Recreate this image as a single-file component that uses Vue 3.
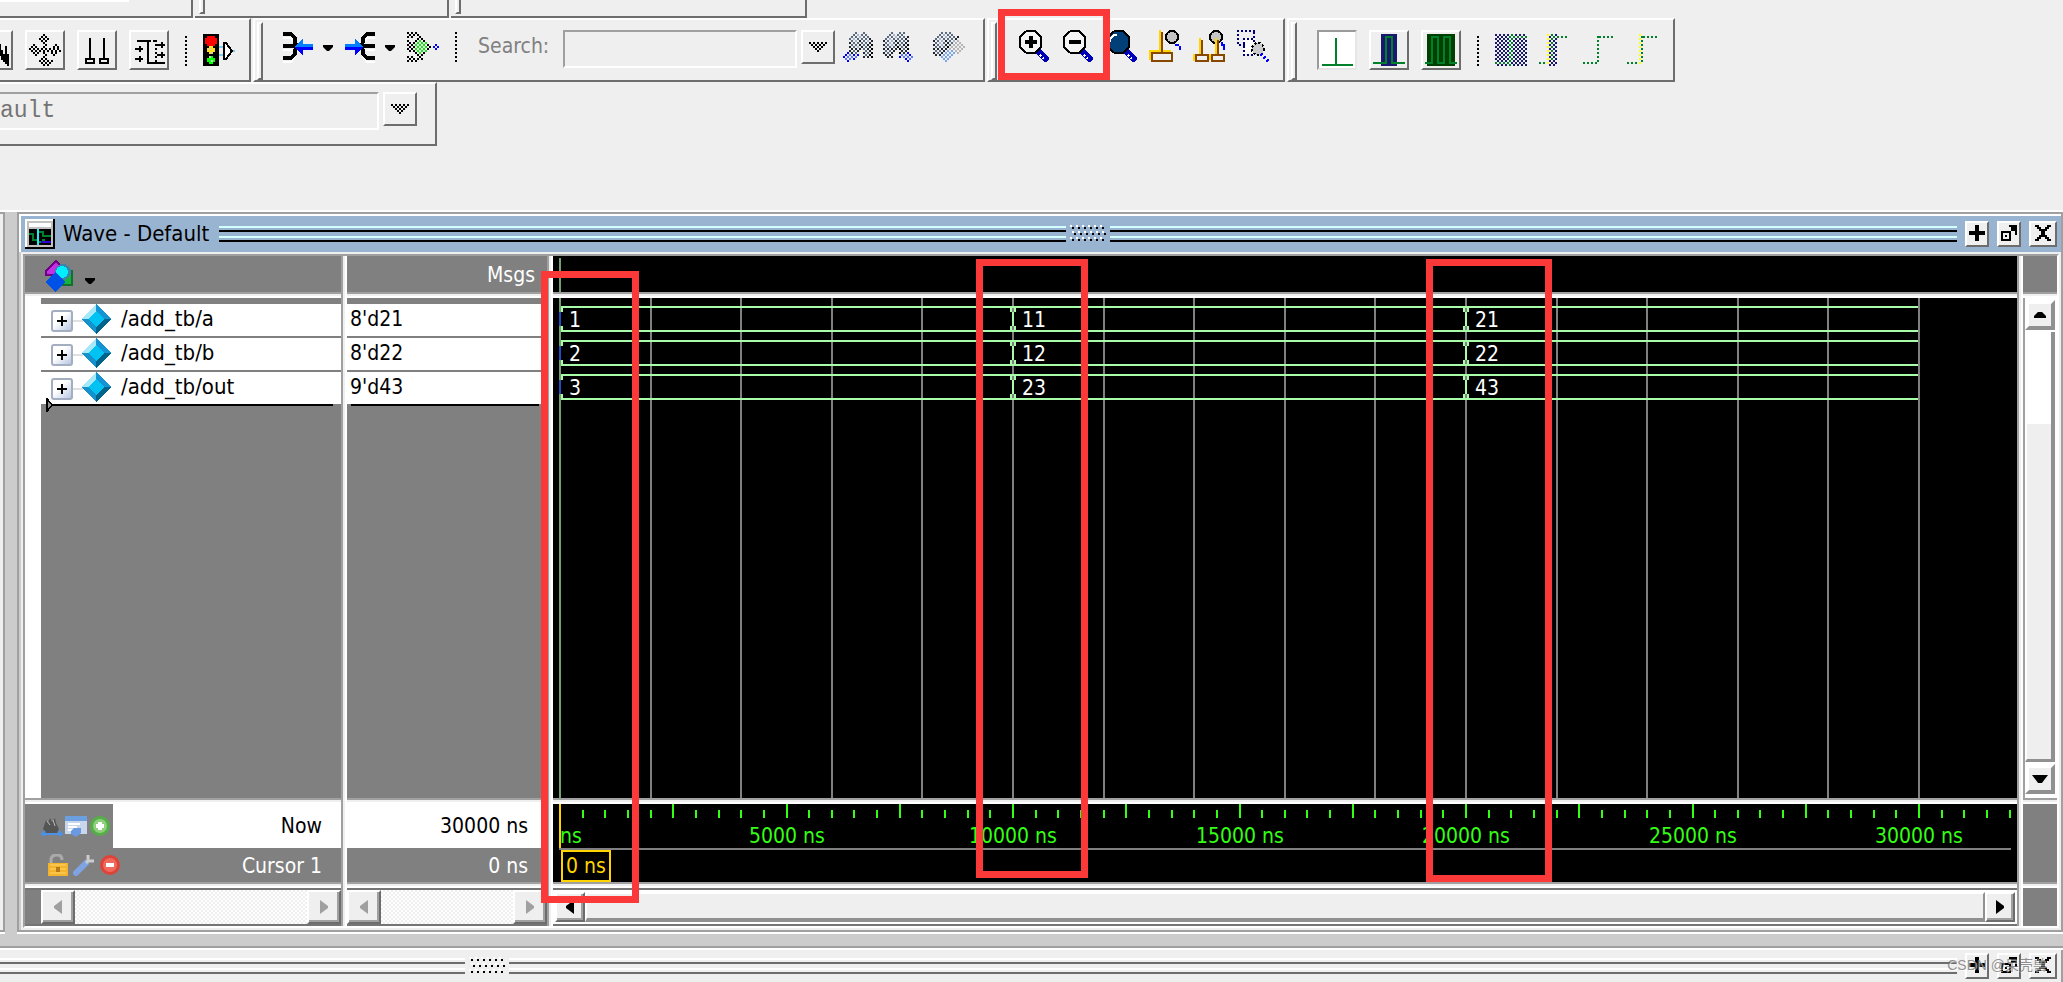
<template>
  <div class="app">
    <header class="toolbars">
      <div class="tb-row tb-row-top">
        <div class="tb-stub tb-stub-a"><span class="stub-edge"></span></div>
        <div class="tb-stub tb-stub-b"><span class="stub-handle"></span></div>
        <div class="tb-stub tb-stub-c"><span class="stub-handle"></span></div>
      </div>

      <div class="tb-row">
        <div class="tb tb-edit">
          <button type="button" class="tool cut" aria-label="Select mode">
            <Pix :rows="bitmaps.select" />
          </button>
          <button type="button" class="tool" aria-label="Pan mode">
            <Pix :rows="bitmaps.pan" />
          </button>
          <button type="button" class="tool" aria-label="Two cursor mode">
            <svg class="ico" viewBox="0 0 16 16">
              <path d="M4.5 2v10M11.5 2v10M2.5 12.5h4v2h-4zM9.5 12.5h4v2h-4z" fill="none" stroke="#000" />
            </svg>
          </button>
          <button type="button" class="tool" aria-label="Edit mode">
            <svg class="ico" viewBox="0 0 16 16">
              <path d="M2 3.5h5.5v11h8.5" fill="none" stroke="#000" />
              <path d="M8 3.5h4M11.5 3v11" fill="none" stroke="#000" stroke-dasharray="1 1" />
              <path d="M1 7.500h4M1 12.500h4M12 5.500h4M12 10.500h4M3.500 6v3M3.500 11v3M14.500 4v3M14.500 9v3" fill="none" stroke="#000" />
            </svg>
          </button>
          <span class="sep"></span>
          <button type="button" class="flat low" aria-label="Stop">
            <svg class="ico" viewBox="0 0 16 16">
              <path d="M0 0h8v16H0z" />
              <path d="M2 1h4v1h1v3H6v1H2V5H1V2h1z" fill="#f00" />
              <path d="M3 6h2v1h1v2H5v1H3V9H2V7h1z" fill="#ffde20" />
              <path d="M3 11h2v1h1v2H5v1H3v-1H2v-2h1z" fill="#0f0" />
              <path d="M3 7h1v1H3zM4 9h1v1H4zM3 11h1v1H3zM4 13h1v1H4z" fill="#ccc" />
              <path d="M8 6.500h2M8 10.500h2M15 8.500h1" stroke="#79cbe8" />
              <path d="M10.500 4.500h1l3 4-3 4h-1z" fill="#fff" stroke="#000" />
            </svg>
          </button>
        </div>

        <div class="tb tb-search">
          <span class="handle"></span>
          <button type="button" class="flat drop" aria-label="Merge">
            <svg class="ico" viewBox="0 0 16 16">
              <path d="M0 3h4l2 3M0 9h6M0 15h4l2-3" fill="none" stroke="#fff" />
              <path d="M0 1h4l2 2v2l1 2-1 2v2l-2 2H0M0 7h6" fill="none" stroke="#000" stroke-width="2" />
              <path d="M6 7.500L10 3v3h5v2z" fill="#0080ff" />
              <path d="M6 7.500L10 12V9h5V7.500z" fill="#00f" />
            </svg>
            <span class="caret"></span>
          </button>
          <button type="button" class="flat drop" aria-label="Expand">
            <svg class="ico" viewBox="0 0 16 16">
              <path d="M15 3h-4l-2 3M15 9H9M15 15h-4l-2-3" fill="none" stroke="#fff" />
              <path d="M15 1h-4L9 3v2L8 7l1 2v2l2 2h4M15 7H9" fill="none" stroke="#000" stroke-width="2" />
              <path d="M9 7.500L5 3v3H0v2z" fill="#0080ff" />
              <path d="M9 7.500L5 12V9H0V7.500z" fill="#00f" />
            </svg>
            <span class="caret"></span>
          </button>
          <button type="button" class="flat" aria-label="Show drivers"><Pix :rows="bitmaps.drivers" checker /></button>
          <span class="sep sep-high"></span>
          <label class="search-label" for="search">Search:</label>
          <input id="search" class="field" type="text" />
          <button type="button" class="tool arrow" aria-label="Search history"><Pix :rows="bitmaps.down" checker /></button>
          <button type="button" class="flat" aria-label="Find previous"><Pix :rows="bitmaps.findPrev" checker /></button>
          <button type="button" class="flat" aria-label="Find next"><Pix :rows="bitmaps.findNext" checker /></button>
          <button type="button" class="flat find-opt" aria-label="Find options"><Pix :rows="bitmaps.findOpt" checker /></button>
        </div>

        <div class="tb tb-zoom">
          <span class="handle"></span>
          <button v-for="z in ['in', 'out', 'full']" :key="z" type="button" class="flat" :aria-label="'Zoom ' + z">
            <svg class="ico" viewBox="0 0 16 16">
              <path d="M11 10l5 5M10 11l5 5" stroke="#0000b8" stroke-width="2" />
              <path d="M11.500 12.500l2 2" stroke="#fff" stroke-dasharray="1 1" />
              <path
                d="M5 .5h4l3 3v5l-3 3H5l-1-.5-2.500-2.500v-5L4 1z"
                :fill="z === 'full' ? '#003f78' : '#f5f5f5'"
                stroke="#000"
              />
              <path v-if="z === 'full'" d="M2.500 6V4.500l2-2H6" fill="none" stroke="#fff" />
              <path v-else d="M4 6h6" stroke="#000" stroke-width="2" />
              <path v-if="z === 'in'" d="M7 3v6" stroke="#000" stroke-width="2" />
            </svg>
          </button>
          <button type="button" class="flat" aria-label="Zoom on cursor">
            <svg class="ico" viewBox="0 0 16 16">
              <circle cx="11.500" cy="3.500" r="3" fill="#c4c4c4" stroke="#000" />
              <path d="M13 7h2v1h1v2h-1V8h-2z" fill="#00f" />
              <path d="M5.500 0v11M.5 15V10.500H11" stroke="#ffd400" fill="none" />
              <path d="M6.500 1v10M1.500 11.500h10v4h-10z" fill="none" stroke="#874900" />
            </svg>
          </button>
          <button type="button" class="flat" aria-label="Zoom between cursors">
            <svg class="ico" viewBox="0 0 16 16">
              <circle cx="11.500" cy="3.500" r="3" fill="#c4c4c4" stroke="#000" />
              <path d="M14 6h1v1h1v3h-1V8h-1z" fill="#00f" />
              <path d="M3.500 4v8M.5 15.500v-3H7M11.500 4v8M8.500 15v-2.500H15" stroke="#ffd400" fill="none" />
              <path d="M4.500 5v7M1.500 12.500h6v3h-6zM12.500 5v7M9.500 12.500h6v3h-6z" fill="none" stroke="#874900" />
            </svg>
          </button>
          <button type="button" class="flat" aria-label="Zoom region">
            <svg class="ico" viewBox="0 0 16 16">
              <path d="M3 4h6v8H3z" fill="#fff" />
              <path d="M.5 0v8M0 .5h9M8.500 1v5M1 7.500h3M3.500 4v9M3 4.500h6M3 12.500h6" fill="none" stroke="#00007a" stroke-dasharray="1 1" />
              <circle cx="10.500" cy="9.500" r="3" fill="#ccc" stroke="#000" stroke-dasharray="1 1" />
              <path d="M12 12l4 4" stroke="#00f" stroke-width="2" stroke-dasharray="1 1" />
            </svg>
          </button>
        </div>

        <div class="tb tb-wave">
          <span class="handle"></span>
          <button type="button" class="tool pressed" aria-label="Cursor pulse">
            <svg class="ico" viewBox="0 0 16 16">
              <path d="M.500 15.500H16M7.500 2v13" fill="none" stroke="#00802b" />
            </svg>
          </button>
          <button type="button" class="tool" aria-label="Single pulse">
            <svg class="ico" viewBox="0 0 16 16">
              <path d="M4 0h8v16H4z" fill="#191970" />
              <path d="M0 14.500h6.500v-13h3v13H16" fill="none" stroke="#00802b" />
            </svg>
          </button>
          <button type="button" class="tool" aria-label="Double pulse">
            <svg class="ico" viewBox="0 0 16 16">
              <path d="M1 0h14v16H1z" fill="#004000" />
              <path d="M0 14.500h3.500v-13h3v13h3v-13h3v13H16" fill="none" stroke="#00802b" />
            </svg>
          </button>
          <span class="sep"></span>
          <button type="button" class="flat low" aria-label="Fill all"><Pix :rows="bitmaps.fillAll" checker /></button>
          <button type="button" class="flat low" aria-label="Fill edge">
            <Pix :rows="bitmaps.fillEdge" />
          </button>
          <button type="button" class="flat low" aria-label="Rising edge">
            <svg class="ico" viewBox="0 0 16 16">
              <path d="M0 14.500h7M7.500 14V1M8 1.500h7" fill="none" stroke="#00802b" stroke-dasharray="1 1" />
            </svg>
          </button>
          <button type="button" class="flat low" aria-label="Edge at cursor">
            <svg class="ico" viewBox="0 0 16 16">
              <path d="M0 14.500h6M7.500 14V1M8 1.500h7" fill="none" stroke="#00802b" stroke-dasharray="1 1" />
              <path d="M6.500 0v16" stroke="#ff0" stroke-dasharray="1 1" />
            </svg>
          </button>
        </div>
      </div>

      <div class="tb tb-layout">
        <input class="field layout-field" type="text" value="ault" aria-label="Layout" />
        <button type="button" class="tool arrow" aria-label="Layout list"><Pix :rows="bitmaps.down" checker /></button>
      </div>
      <div class="mark mark-zoom"></div>
    </header>

    <main class="workspace">
      <aside class="neighbour"></aside>
      <section class="window">
        <div class="titlebar">
          <svg class="win-icon" viewBox="0 0 15 15">
            <path d="M0 0h15v15H0z" />
            <path d="M0 0h14v14H0z" fill="#fff" />
            <path d="M1 1h13v13H1z" fill="#c0c0c0" />
            <path d="M2 2h11v2H2z" fill="#fff" />
            <path d="M2 5h11v8H2z" />
            <path d="M2 7.500h2v3h2M6 6.500h3v2h4M7 11.500h2v-1h1" fill="none" stroke="#00802b" />
            <path d="M6.500 5v8" stroke="#2ee6f4" />
            <path d="M8 11.500h5" stroke="#2b00d5" />
          </svg>
          <h1>Wave - Default</h1>
          <span class="rail"></span>
          <span class="dots"><i v-for="n in 18" :key="n"></i></span>
          <span class="rail"></span>
          <WinButtons class="win-buttons" />
        </div>

        <div class="panes">
          <div class="cell head-names">
            <button type="button" class="flat objects" aria-label="Object filter">
              <svg class="ico" viewBox="0 0 16 16">
                <path d="M5.500 .5l4 3.500-4 3.500h-5v-2z" fill="#c42fe6" stroke="#700083" />
                <path d="M7.500 5.500h6v7h-6z" fill="#17b13b" stroke="#13702d" />
                <circle cx="9" cy="6" r="4" fill="#3b86a7" />
                <circle cx="8.500" cy="6" r="3" fill="#00efff" />
                <path d="M5 6l5 5-5 5-5-5z" fill="#0052e6" />
              </svg>
              <span class="caret"></span>
            </button>
          </div>
          <div class="cell head-msgs">Msgs</div>
          <div class="cell head-wave"><span class="origin"></span></div>
          <div class="cell head-end"></div>

          <div class="cell body-names">
            <ul>
              <li v-for="s in signals" :key="s.name">
                <button type="button" class="expander" :aria-label="'Expand ' + s.name"></button>
                <span class="twig"></span>
                <svg class="gem" viewBox="0 0 30 30">
                  <path d="M15 0L0 15h15z" fill="#a4e8f9" />
                  <path d="M15 0l15 15H15z" fill="#1593d3" />
                  <path d="M0 15l15 15V15z" fill="#1591cb" />
                  <path d="M30 15L15 30V15z" fill="#00638b" />
                  <path d="M15 7l8 8-8 8-8-8z" fill="#00c2f3" />
                </svg>
                {{ s.name }}
              </li>
            </ul>
            <div class="end-line"></div>
            <svg class="insert-mark" viewBox="0 0 5 9">
              <path d="M.5 .5v8l3.500-4z" fill="#909090" stroke="#000" />
            </svg>
          </div>
          <div class="cell body-values">
            <ul>
              <li v-for="s in signals" :key="s.name">{{ s.value }}</li>
            </ul>
            <div class="end-line"></div>
          </div>
          <div class="cell body-wave">
            <svg class="plot">
              <rect
                v-for="t in gridTimes"
                :key="t"
                :x="timeX(t) - 1"
                y="0"
                width="2"
                height="100%"
                :fill="t === 0 ? '#74a074' : '#808080'"
              />
              <g v-for="(s, i) in signals" :key="s.name">
                <rect :x="timeX(0) + 1" :y="8 + i * 34" :width="timeX(30000) - timeX(0) - 2" height="2" fill="#a9fda9" />
                <rect :x="timeX(0) + 1" :y="32 + i * 34" :width="timeX(30000) - timeX(0) - 2" height="2" fill="#a9fda9" />
                <g v-for="(v, k) in s.samples" :key="k">
                  <path :d="edge(timeX(k * 10000), 8 + i * 34, k)" fill="#a9fda9" />
                  <rect
                    :x="timeX(k * 10000) - 1"
                    :y="14 + i * 34"
                    width="2"
                    height="14"
                    :fill="k ? '#a9fda9' : '#1e4fc4'"
                  />
                  <text :x="timeX(k * 10000) + 9" :y="29 + i * 34" fill="#fff">{{ v }}</text>
                </g>
              </g>
            </svg>
          </div>
          <div class="cell body-end">
            <button type="button" class="bevel up" aria-label="Scroll up"><span class="tri tri-up"></span></button>
            <div class="vthumb"></div>
            <div class="vtrough"></div>
            <button type="button" class="bevel" aria-label="Scroll down"><span class="tri tri-down"></span></button>
          </div>

          <div class="cell foot-names">
            <div class="foot-line now">
              <span class="foot-icons">
                <svg viewBox="0 0 22 22">
                  <path d="M2 14L5 5l2 3 2-5 2 4 3-4 1 5 3 6-2 4H5z" fill="#555" />
                  <path d="M6 6l3 4M12 5l2 6" stroke="#bbb" />
                  <path d="M1 19h20M4 16l-3 3 3 2M18 16l3 3-3 2" fill="none" stroke="#4c91e8" stroke-width="2" />
                </svg>
                <svg viewBox="0 0 22 22">
                  <path d="M0 1h22v18H0z" fill="#c9d7ec" />
                  <path d="M0 1h22v5H0z" fill="#6b9fe0" />
                  <path d="M3 9h12M3 12h9M3 15h5" stroke="#fff" stroke-width="2" />
                  <path d="M6 16l3-3h7v5l-5 4-5-3z" fill="#6a99e2" />
                </svg>
                <svg viewBox="0 0 22 22">
                  <circle cx="11" cy="11" r="10" fill="#56ae48" />
                  <circle cx="11" cy="11" r="7" fill="#8fd07c" />
                  <path d="M11 7v8M7 11h8" stroke="#fff" stroke-width="4" />
                </svg>
              </span>
              <span class="foot-text">Now</span>
            </div>
            <div class="foot-line cursor">
              <span class="foot-icons">
                <svg viewBox="0 0 22 22">
                  <path d="M4 10V6q0-5 6-5 5 0 5 5" fill="none" stroke="#aaa" stroke-width="3" />
                  <path d="M1 9h20v13H1z" fill="#f3b32d" />
                  <path d="M3 11h16M3 15h16M3 19h16" stroke="#ffd66c" />
                  <path d="M9 13h4v5H9z" fill="#b97813" />
                </svg>
                <svg viewBox="0 0 22 22">
                  <path d="M3 19L13 9" stroke="#7ea4e4" stroke-width="6" stroke-linecap="round" />
                  <path d="M13 9l3-3M15 1v6h6" fill="none" stroke="#ccc" stroke-width="3" />
                </svg>
                <svg viewBox="0 0 22 22">
                  <circle cx="11" cy="11" r="10" fill="#dc4437" />
                  <circle cx="11" cy="11" r="7" fill="#f0695d" />
                  <path d="M7 11h8" stroke="#fff" stroke-width="4" />
                </svg>
              </span>
              <span class="foot-text">Cursor 1</span>
            </div>
          </div>
          <div class="cell foot-values">
            <div class="foot-line now"><span class="foot-text">30000 ns</span></div>
            <div class="foot-line cursor"><span class="foot-text">0 ns</span></div>
          </div>
          <div class="cell foot-wave">
            <svg class="plot">
              <rect
                v-for="t in tickTimes"
                :key="t"
                :x="timeX(t) - 1"
                :y="t % 2500 ? 6 : 0"
                width="2"
                :height="t % 2500 ? 8 : 14"
                fill="#33ff14"
              />
              <rect x="6" y="0" width="2" height="44" fill="#ffd400" />
              <text x="7" y="39" fill="#33ff14">ns</text>
              <text v-for="t in labelTimes" :key="t" :x="timeX(t)" y="39" text-anchor="middle" fill="#33ff14">
                {{ t }} ns
              </text>
            </svg>
            <span class="axis"></span>
            <span class="cursor-flag">0 ns</span>
          </div>
          <div class="cell foot-end"></div>

          <div class="cell scroll-names hscroll">
            <button type="button" class="bevel off" aria-label="Scroll names left"><span class="tri tri-left"></span></button>
            <span class="trough"></span>
            <button type="button" class="bevel off" aria-label="Scroll names right"><span class="tri tri-right"></span></button>
          </div>
          <div class="cell scroll-values hscroll">
            <button type="button" class="bevel off" aria-label="Scroll values left"><span class="tri tri-left"></span></button>
            <span class="trough"></span>
            <button type="button" class="bevel off" aria-label="Scroll values right"><span class="tri tri-right"></span></button>
          </div>
          <div class="cell scroll-wave hscroll">
            <button type="button" class="bevel" aria-label="Scroll wave left"><span class="tri tri-left"></span></button>
            <span class="hthumb"></span>
            <button type="button" class="bevel" aria-label="Scroll wave right"><span class="tri tri-right"></span></button>
          </div>
          <div class="cell scroll-end"></div>

          <span class="sash-h sash-h1"></span>
          <span class="sash-h sash-h2"></span>
          <span class="sash-h sash-h3"></span>
          <span class="sash-v sash-v1"></span>
          <span class="sash-v sash-v2"></span>
          <span class="sash-v sash-v3"></span>
        </div>
        <div class="mark mark-0"></div>
        <div class="mark mark-1"></div>
        <div class="mark mark-2"></div>
      </section>
    </main>

    <footer class="dock">
      <span class="rail rail-short"></span>
      <span class="dots"><i v-for="n in 18" :key="n"></i></span>
      <span class="rail rail-long"></span>
      <WinButtons class="win-buttons" />
      <span class="watermark">CSDN @呆壳兽</span>
    </footer>
  </div>
</template>

<script setup>
import { h } from "vue";

const signals = [
  { name: "/add_tb/a", value: "8'd21", samples: [1, 11, 21] },
  { name: "/add_tb/b", value: "8'd22", samples: [2, 12, 22] },
  { name: "/add_tb/out", value: "9'd43", samples: [3, 23, 43] },
];

// time axis
const pxPerNs = 0.0453;
const timeX = (t) => 7 + Math.round(t * pxPerNs);
const range = (end, step) =>
  Array.from({ length: Math.floor(end / step) + 1 }, (_, i) => i * step);
const gridTimes = range(30000, 2000);
const tickTimes = range(32000, 500);
const labelTimes = range(30000, 5000).slice(1);

// small brackets where a bus changes value
function edge(x, y, k) {
  const right = `M${x + 1} ${y}h2v6h-2zM${x + 1} ${y + 20}h2v6h-2z`;
  if (!k) return right;
  return `${right}M${x - 3} ${y}h2v6h-2zM${x - 3} ${y + 20}h2v6h-2z`;
}

const palette = {
  k: "#000",
  g: "#14e614",
  b: "#0000ff",
  l: "#5b77ff",
  s: "#5b6b80",
  d: "#222831",
  p: "#a9b4cc",
  y: "#b5b5b5",
  c: "#7ba7ea",
  n: "#191970",
  e: "#00802b",
  Y: "#ffff00",
};

// 16x16 bitmap icon, optionally drawn on every second pixel (disabled look)
function Pix(props) {
  const paths = {};
  props.rows.forEach((row, y) => {
    [...row].forEach((ch, x) => {
      if (!palette[ch]) return;
      if (props.checker !== undefined && (x + y) % 2) return;
      paths[ch] = (paths[ch] || "") + `M${x} ${y}h1v1h-1z`;
    });
  });
  return h(
    "svg",
    { class: "ico", viewBox: "0 0 16 16" },
    Object.keys(paths).map((ch) => h("path", { d: paths[ch], fill: palette[ch] }))
  );
}
Pix.props = ["rows", "checker"];

function WinButtons() {
  const icons = [
    ["Zoom window", "0 0 12 11", "M5 1h2v3h3v2H7v3H5V6H2V4h3z"],
    ["Undock", "0 1 12 11", "M2 5h5v5H2zM3 6v3h3V6zM4 7h1v1H4zM6 2h4v5H9V5H8V4H7V3H6zM7 4h1v1H7z"],
    ["Close", "2 1 12 11", "M4 2h2v1h1v1h2V3h1V2h2v1h-1v1h-1v1H9v2h1v1h1v1h1v1h-2V9H9V8H7v1H6v1H4V9h1V8h1V7h1V5H6V4H5V3H4z"],
  ];
  return h(
    "div",
    icons.map(([label, viewBox, d]) =>
      h("button", { type: "button", class: "win-btn", "aria-label": label }, [
        h("svg", { viewBox }, [h("path", { d, "fill-rule": "evenodd" })]),
      ])
    )
  );
}

const bitmaps = {
  select: [
    "",
    "",
    "",
    "",
    "..........k.....",
    "..........kk....",
    "...........k..k.",
    "...........k..k.",
    "...........kk.k.",
    "...........kk.k.",
    "...........kkkkk",
    "............kkkk",
    "............kkkk",
    ".............kkk",
    "..............kk",
    "...............k",
  ],
  pan: [
    ".......k........",
    "......k.k.......",
    ".....k.k.k......",
    "......k.k.......",
    ".......k........",
    "..k.....k....k..",
    ".k.k...k....k.k.",
    "k.k.k.k.k.k.k.k.",
    ".k.k.k.k.k.k.k.k",
    "..k.k..k...k.k..",
    "...k....k...k...",
    ".......k........",
    "......k.k.......",
    ".....k.k.k.k....",
    "......k.k.k.....",
    ".......k.k......",
  ],
  drivers: [
    "kkkkkk..........",
    "kkkkkkk.........",
    "kkk...kk........",
    ".....kkkk.......",
    "kk..kkggkk......",
    "kkkkkgggggk.....",
    "kkkkggggggkk.bb.",
    "kkkkggggggkkbbbb",
    "kkkkggggggkk.bb.",
    "kkkkkgggggk.....",
    "....kkggkk......",
    ".....kkkk.......",
    "kkkk..kk........",
    "kkkkkkkk........",
    "kkkkk...........",
  ],
  down: [
    "",
    "",
    "",
    "",
    "",
    "..kkkkkkkkkkk...",
    "...kkkkkkkkk....",
    "....kkkkkkk.....",
    ".....kkkkk......",
    "......kkk.......",
    ".......k........",
  ],
  findPrev: [
    ".....sss.sss....",
    "....sssppssss...",
    "...ssssppssssd..",
    "...sppsssssssd..",
    "...dsppsdssspdd.",
    "...dsspsdsssddk.",
    "...dssspddssddk.",
    "...dssspddssddk.",
    "...dddddddssddk.",
    "...dssdd..dssdk.",
    "..bbdss...ddsdk.",
    ".blllbdb..dsdkk.",
    "bllllllb..dddkk.",
    "blllbbb.........",
    ".bbb...........",
    "..b.............",
  ],
  findNext: [
    "...sss.ssss.....",
    "..sssppssss.....",
    ".ssssspssssdd...",
    ".ssppssssssdd...",
    "dssppsdsssspd...",
    "dsspssddssddk...",
    "dssspsdkssddk...",
    "dssspsdkkssdk...",
    "dddddddkkssdk...",
    "dsssdd..kdddk...",
    "dsssdd..kbddbb..",
    "ddsdd...bllllbb.",
    "..ddd..bbllllllb",
    "..........bbllb.",
    "...........bbb..",
    "............b...",
  ],
  findOpt: [
    "...sssssss......",
    "..sssppssss.....",
    ".ssssspssssdd...",
    ".ssppssssssdd...",
    "dssppsdssspyyy..",
    "dsspssddsspyyyy.",
    "dssspsdkspyyyyyy",
    "dssspsdkpyyyyyyy",
    "dddddddpyyyyyyy.",
    "dsssddkcccyyyy..",
    "dsssddcccccyy...",
    "ddsddcccccc.....",
    "....cccccc......",
    "....ccccc.......",
    ".....ccc........",
    "......c.........",
  ],
  fillAll: Array.from({ length: 16 }, (_, y) =>
    y === 1
      ? "nnnnnnneeeeeeeee"
      : y === 14
        ? "eeeeeeeennnnnnnn"
        : "nnnnnnneennnnnnn"
  ),
  fillEdge: Array.from({ length: 16 }, (_, y) => {
    if (y === 1) return ".....n.e.e.e.e..";
    if (y === 14) return "e.e.Y.n.n.......";
    return y % 2 ? ".....n.n........" : "....Y.e.n.......";
  }),
};
</script>

<style>
body {
  margin: 0;
  background: #efefef;
}
</style>

<style scoped>
.app {
  min-height: 100vh;
  display: flex;
  flex-direction: column;
  background: #efefef;
  font-family: "DejaVu Sans Condensed", "Noto Sans", "Noto Sans CJK SC", sans-serif;
  font-size: 21px;
  line-height: 32px;
  color: #000;
  overflow: hidden;
}
.app :deep(button) {
  font: inherit;
  color: inherit;
  padding: 0;
  margin: 0;
  border: 0;
  border-radius: 0;
  background: transparent;
  box-sizing: border-box;
  flex: none;
}
.app :deep(svg) {
  display: block;
  flex: none;
  shape-rendering: crispEdges;
}
.ico {
  width: 32px;
  height: 32px;
}

/* toolbars */
.toolbars {
  position: relative;
  height: 210px;
  flex: none;
}
.tb-row {
  display: flex;
  gap: 2px;
}
.tb-row-top {
  height: 18px;
}
.tb-stub {
  box-sizing: border-box;
  border-right: 2px solid #6d6d6d;
  border-bottom: 2px solid #6d6d6d;
}
.tb-stub-a {
  width: 193px;
}
.tb-stub-b {
  width: 254px;
}
.tb-stub-c {
  width: 356px;
}
.stub-edge {
  display: block;
  width: 129px;
  height: 2px;
  background: #fff;
}
.stub-handle {
  display: block;
  width: 2px;
  height: 12px;
  margin-left: 4px;
  border: 2px solid #6d6d6d;
  border-left-color: #fff;
  border-top: 0;
}
.tb {
  box-sizing: border-box;
  height: 64px;
  display: flex;
  align-items: flex-start;
  gap: 12px;
  padding: 10px 0 0;
  border: 2px solid #fff;
  border-right-color: #6d6d6d;
  border-bottom-color: #6d6d6d;
}
.tb-edit {
  width: 251px;
  border-left: 0;
  overflow: hidden;
}
.tb-search {
  width: 732px;
  gap: 8px;
}
.tb-zoom {
  width: 298px;
}
.tb-wave {
  width: 388px;
}
.handle {
  width: 2px;
  height: 54px;
  margin: -8px 8px 0 2px;
  border: 2px solid #fff;
  border-right-color: #6d6d6d;
  border-bottom-color: #6d6d6d;
  box-sizing: content-box;
  flex: none;
}
.app :deep(.tool) {
  width: 40px;
  height: 40px;
  padding: 2px;
  border: 2px solid #fff;
  border-right-color: #6d6d6d;
  border-bottom-color: #6d6d6d;
}
.app .tool.cut {
  margin-left: -27px;
}
.app .tool.pressed {
  background: #fff;
  border-color: #9a9a9a #e6e6e6 #e6e6e6 #9a9a9a;
}
.app .tool.arrow {
  width: 34px;
  height: 34px;
  padding: 0;
  overflow: hidden;
}
.app .flat.low {
  margin-top: 4px;
}
.sep {
  width: 2px;
  height: 30px;
  margin: 6px 4px 0;
  background: repeating-linear-gradient(#000 0 2px, transparent 2px 4px);
  flex: none;
}
.tb-wave .sep {
  margin-right: 4px;
}
.tb-search .sep-high {
  margin: 2px 13px 0 8px;
}
.app .tb-search .flat {
  margin-top: 2px;
}
.tb-search .handle {
  margin-right: 12px;
}
.app .drop {
  display: flex;
  gap: 8px;
  align-items: center;
  width: 54px;
}
.caret {
  width: 10px;
  height: 6px;
  background: #000;
  clip-path: polygon(0 0, 100% 0, 100% 33%, 60% 100%, 40% 100%, 0 33%);
}
.search-label {
  width: 77px;
  color: #808080;
}
.field {
  box-sizing: border-box;
  height: 38px;
  padding: 0;
  border: 2px solid #a0a0a0;
  border-right-color: #fff;
  border-bottom-color: #fff;
  border-radius: 0;
  background: #efefef;
  color: #747474;
  font: 23px "Liberation Mono", monospace;
}
.tb-search .field {
  flex: 1;
  min-width: 0;
}
.app .tb-search .arrow {
  margin-left: -4px;
}
.app .tb-search .find-opt {
  margin: 2px 18px 0 10px;
}
.tb-layout {
  width: 437px;
  gap: 4px;
  padding-top: 8px;
  border-left: 0;
}
.layout-field {
  width: 379px;
  border-left: 0;
}

/* annotation frames */
.mark {
  position: absolute;
  box-sizing: border-box;
  border: 7px solid #fc3939;
  pointer-events: none;
}
.mark-zoom {
  left: 998px;
  top: 9px;
  width: 112px;
  height: 71px;
}
.mark-0 {
  left: 522px;
  top: 57px;
  width: 98px;
  bottom: 27px;
}
.mark-1 {
  left: 957px;
  top: 45px;
  width: 112px;
  bottom: 52px;
}
.mark-2 {
  left: 1407px;
  top: 45px;
  width: 126px;
  bottom: 48px;
}

/* workspace */
.workspace {
  flex: 1;
  display: flex;
  gap: 12px;
  padding-bottom: 12px;
  border-top: 2px solid #fff;
  background: #ccc;
}
.neighbour {
  box-sizing: border-box;
  width: 5px;
  margin-bottom: 2px;
  border: 2px solid #a0a0a0;
  border-left: 0;
  background: #efefef;
  box-shadow: 0 2px #fff;
}
.window {
  position: relative;
  flex: 1;
  min-width: 0;
  display: flex;
  flex-direction: column;
  border: 2px solid #a0a0a0;
  box-shadow: 0 2px #fff;
  margin-bottom: 2px;
}
.titlebar {
  display: flex;
  align-items: center;
  gap: 4px;
  height: 36px;
  flex: none;
  padding: 0 4px;
  border-top: 2px solid #fff;
  border-left: 2px solid #fff;
  background: #99b4d1;
}
.win-icon {
  width: 30px;
  height: 30px;
}
h1 {
  margin: 0 6px 0 4px;
  font-size: 22px;
  font-weight: 400;
  line-height: 32px;
  white-space: nowrap;
}
.rail {
  flex: 1;
  height: 16px;
  background: linear-gradient(
    #d4ffff 0 2px,
    transparent 2px 4px,
    #000 4px 6px,
    transparent 6px 10px,
    #d4ffff 10px 12px,
    transparent 12px 14px,
    #000 14px 16px
  );
}
.dots {
  display: grid;
  grid-template-columns: repeat(6, 6px);
  grid-auto-rows: 6px;
  width: 36px;
}
.dots i {
  width: 2px;
  height: 2px;
  background: #fff;
  box-shadow: 2px 2px #000;
}
.dots i:nth-child(n + 7):nth-child(-n + 12) {
  margin-left: 2px;
}
.win-buttons {
  display: flex;
  gap: 8px;
  margin-left: 4px;
}
.app :deep(.win-btn) {
  width: 24px;
  height: 26px;
  border: 2px solid #fff;
  border-right-color: #6d6d6d;
  border-bottom-color: #6d6d6d;
  background: #efefef;
  display: flex;
  align-items: center;
  justify-content: center;
}
.app :deep(.win-btn:last-child) {
  width: 28px;
}
.app :deep(.win-btn svg) {
  width: 24px;
  height: 22px;
}

/* panes */
.panes {
  flex: 1;
  display: grid;
  grid-template-columns: 316px 6px 200px 6px minmax(0, 1fr) 6px 34px;
  grid-template-rows: 36px 6px minmax(160px, 1fr) 6px 78px 6px 38px;
  border: 2px solid #a0a0a0;
  border-right: 2px solid #fff;
  border-bottom-color: #fff;
  margin: 2px 2px 2px 4px;
  box-shadow: 0 0 0 2px #efefef;
}
.cell {
  background: #808080;
  min-width: 0;
  min-height: 0;
  overflow: hidden;
}
.head-names,
.body-names,
.foot-names,
.scroll-names {
  grid-column: 1;
}
.head-msgs,
.body-values,
.foot-values,
.scroll-values {
  grid-column: 3;
}
.head-wave,
.body-wave,
.foot-wave,
.scroll-wave {
  grid-column: 5;
}
.head-end,
.body-end,
.foot-end,
.scroll-end {
  grid-column: 7;
}
[class*="head-"] {
  grid-row: 1;
}
[class*="body-"] {
  grid-row: 3;
}
[class*="foot-"].cell {
  grid-row: 5;
}
.cell[class*="scroll-"] {
  grid-row: 7;
}
.sash-h {
  grid-column: 1 / -1;
  background: linear-gradient(#a0a0a0 0 2px, #efefef 2px 4px, #fff 4px);
}
.sash-h1 {
  grid-row: 2;
}
.sash-h2 {
  grid-row: 4;
}
.sash-h3 {
  grid-row: 6;
}
.sash-v {
  grid-row: 1 / -1;
  background: linear-gradient(90deg, #a0a0a0 0 2px, #efefef 2px 4px, #fff 4px);
}
.sash-v1 {
  grid-column: 2;
}
.sash-v2 {
  grid-column: 4;
}
.sash-v3 {
  grid-column: 6;
}
.app .objects {
  display: flex;
  gap: 8px;
  align-items: center;
  margin: 4px 0 0 20px;
}
.objects .caret {
  margin-top: 10px;
}
.head-msgs {
  padding-right: 12px;
  line-height: 38px;
  text-align: right;
  color: #fff;
}
.head-wave,
.body-wave,
.foot-wave {
  background: #000;
}
.origin {
  display: block;
  width: 2px;
  height: 34px;
  margin: 2px 0 0 6px;
  background: #74a074;
}
ul {
  list-style: none;
  margin: 0;
  padding: 6px 0 0;
}
li {
  display: flex;
  align-items: center;
  box-sizing: border-box;
  height: 32px;
  margin-bottom: 2px;
  padding-bottom: 2px;
  background: #fff;
  line-height: 30px;
  white-space: nowrap;
}
li:last-child {
  margin-bottom: 0;
}
.body-names {
  position: relative;
  border-left: 16px solid #fff;
}
.body-names li {
  padding-left: 10px;
  font-size: 22px;
}
.body-values li {
  padding-left: 3px;
}
.end-line {
  height: 2px;
  margin: 0 8px 0 10px;
  background: #000;
}
.body-values .end-line {
  margin-left: 4px;
}
.app .expander {
  width: 22px;
  height: 22px;
  margin-top: 4px;
  border: 2px solid #a3aec0;
  border-radius: 3px;
  background: linear-gradient(#000, #000) center / 10px 2px no-repeat,
    linear-gradient(#000, #000) center / 2px 10px no-repeat,
    linear-gradient(135deg, #fff 40%, #b9c6e2);
}
.twig {
  width: 10px;
  height: 2px;
  margin: 4px -2px 0 0;
  background: #e0e0e0;
}
.gem {
  width: 30px;
  height: 30px;
  margin-right: 10px;
}
.insert-mark {
  position: absolute;
  left: 4px;
  top: 100px;
  width: 10px;
  height: 14px;
}
.plot {
  width: 100%;
  height: 100%;
}

/* vertical scroll bar */
.body-end {
  display: flex;
  flex-direction: column;
  padding: 2px 2px 4px 0;
  border-left: 2px solid #a0a0a0;
  background: #fff;
}
.app .bevel {
  width: 30px;
  height: 30px;
  border: 4px solid #fff;
  border-right-color: #909090;
  border-bottom-color: #909090;
  background: #efefef;
  display: flex;
  align-items: center;
  justify-content: center;
}
.app .bevel.up {
  margin-bottom: 2px;
}
.vthumb {
  height: 92px;
  background: #fff;
  border-right: 4px solid #909090;
}
.vtrough {
  flex: 1;
  margin-bottom: 2px;
  background: #efefef;
  border-left: 2px solid #fff;
  border-right: 4px solid #909090;
  border-bottom: 3px solid #909090;
}
.tri {
  flex: none;
  width: 16px;
  height: 8px;
  background: #000;
}
.tri-up {
  width: 12px;
  height: 6px;
  clip-path: polygon(33% 0, 67% 0, 100% 67%, 100% 100%, 0 100%, 0 67%);
}
.tri-down {
  clip-path: polygon(0 0, 100% 0, 62% 100%, 38% 100%);
}
.tri-left,
.tri-right {
  width: 8px;
  height: 14px;
}
.tri-left {
  clip-path: polygon(100% 0, 100% 100%, 0 57%, 0 43%);
}
.tri-right {
  clip-path: polygon(0 0, 0 100%, 100% 57%, 100% 43%);
}

/* footer rows */
.foot-line {
  display: flex;
  justify-content: space-between;
}
.now {
  height: 44px;
  background: #fff;
}
.cursor {
  height: 34px;
  color: #fff;
}
.foot-icons {
  display: flex;
  align-items: center;
  gap: 2px;
  box-sizing: border-box;
  width: 88px;
  padding-left: 16px;
  background: #808080;
}
.foot-icons svg {
  width: 22px;
  height: 22px;
  shape-rendering: auto;
}
.cursor .foot-icons {
  width: 98px;
  padding-left: 22px;
  gap: 4px;
}
.foot-text {
  margin-left: auto;
  padding-right: 19px;
  line-height: 44px;
}
.cursor .foot-text {
  line-height: 36px;
}
.foot-wave {
  position: relative;
}
.axis {
  position: absolute;
  left: 6px;
  right: 6px;
  top: 44px;
  height: 2px;
  background: #808080;
}
.cursor-flag {
  position: absolute;
  left: 8px;
  top: 46px;
  padding: 0 3px;
  border: 2px solid #ffd400;
  line-height: 28px;
  color: #ffd400;
}

/* horizontal scroll bars */
.hscroll {
  display: flex;
  box-sizing: border-box;
  border-top: 2px solid #757575;
  border-bottom: 2px solid #757575;
}
.scroll-names {
  padding-left: 16px;
}
.app .hscroll .bevel {
  width: 34px;
  height: 34px;
  border-width: 2px;
  border-right-color: #6d6d6d;
  border-bottom-color: #6d6d6d;
  box-shadow: inset -2px -2px #a0a0a0;
}
.off .tri {
  background: #a0a0a0;
}
.trough {
  flex: 1;
  background: repeating-conic-gradient(#efefef 0 25%, #fff 0 50%) 0 0 / 4px 4px;
}
.scroll-wave {
  padding: 2px 2px 2px;
  background: #fff;
}
.app .scroll-wave .bevel {
  width: 30px;
  height: 30px;
}
.hthumb {
  flex: 1;
  border: 2px solid #fff;
  border-right: 2px solid #909090;
  border-bottom: 4px solid #909090;
  background: #efefef;
}

/* bottom dock */
.dock {
  position: relative;
  box-sizing: border-box;
  height: 36px;
  flex: none;
  display: flex;
  align-items: center;
  gap: 4px;
  padding: 2px 6px 0 0;
  border-top: 2px solid #a0a0a0;
  box-shadow: inset 0 2px #fff, inset -2px 0 #a0a0a0;
}
.dock .rail {
  background: linear-gradient(
    #fff 0 2px,
    transparent 2px 4px,
    #6d6d6d 4px 6px,
    transparent 6px 10px,
    #fff 10px 12px,
    transparent 12px 14px,
    #6d6d6d 14px 16px
  );
}
.dock .rail-short {
  flex: 465;
}
.dock .rail-long {
  flex: 1448;
}
.watermark {
  position: absolute;
  right: 16px;
  top: 6px;
  font: 14px "Liberation Sans", "Noto Sans CJK SC", sans-serif;
  color: rgba(110, 110, 110, 0.75);
  text-shadow: 1px 1px rgba(255, 255, 255, 0.6);
  white-space: nowrap;
}
</style>
